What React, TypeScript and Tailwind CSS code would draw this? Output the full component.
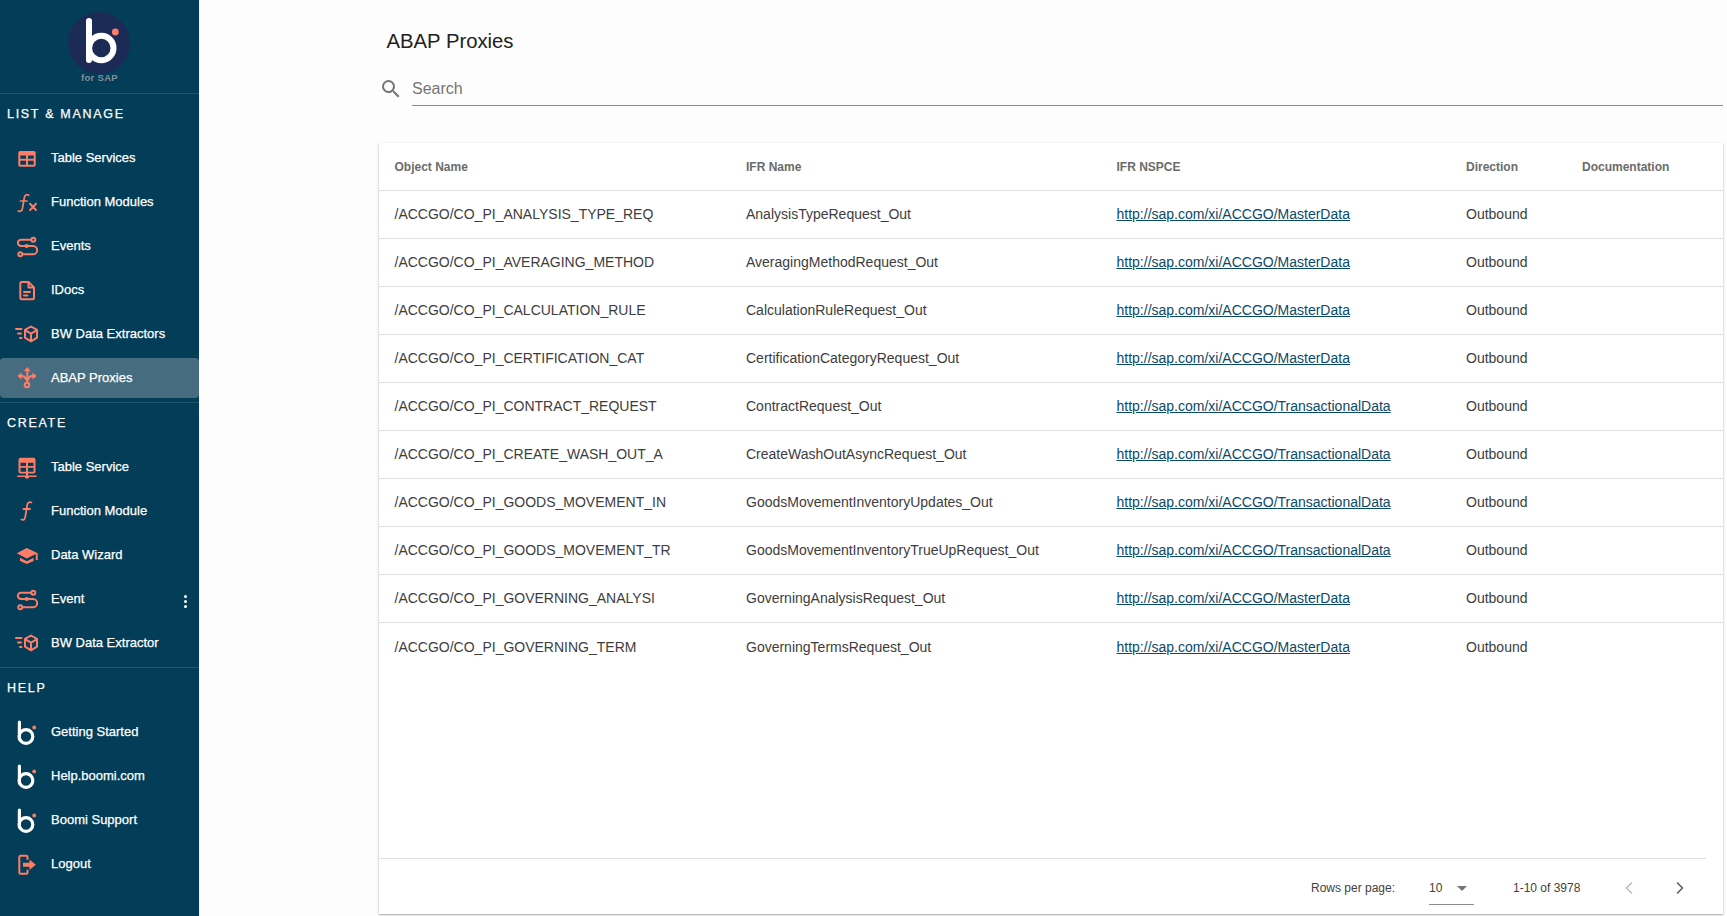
import React from "react";
import { ChevronLeft, ChevronRight } from "lucide-react";

const coral = "#ff7c66";

function BoomiB() {
  return (
    <svg width="24" height="26" viewBox="0 0 24 26" fill="none" className="mt-[1px]">
      <path d="M4.400 2V19" stroke="#fff" strokeWidth="3.200" strokeLinecap="round" />
      <circle cx="11" cy="16.500" r="6.800" stroke="#fff" strokeWidth="3.200" />
      <circle cx="19.200" cy="7.500" r="1.900" fill={coral} />
    </svg>
  );
}

const S = { stroke: coral, strokeWidth: 2, fill: "none", strokeLinecap: "round" as const, strokeLinejoin: "round" as const };

function Svg({ children }: { children: React.ReactNode }) {
  return (
    <svg width="24" height="24" viewBox="0 0 24 24" fill="none">
      {children}
    </svg>
  );
}

const IconTable = () => (
  <Svg>
    <path fill={coral} fillRule="evenodd" d="M5 5h14a1.700 1.700 0 0 1 1.700 1.700V19a1.700 1.700 0 0 1-1.700 1.700H5A1.700 1.700 0 0 1 3.300 19V6.700A1.700 1.700 0 0 1 5 5Zm.300 4.500v3.200h5.700V9.500H5.300Zm7.700 0v3.200h5.700V9.500H13Zm-7.700 5.200v4h5.700v-4H5.300Zm7.700 0v4h5.700v-4H13Z" />
  </Svg>
);
const IconFx = () => (
  <Svg>
    <path {...S} strokeWidth={1.700} d="M13.800 5.200c-2.300-1.300-4-.3-4.500 2.500L7.500 18.300c-.5 2.800-2.200 3.600-4.200 2.600M5.500 11h6.500" />
    <path {...S} d="M15 13.800l6 6.300M21 13.800l-6 6.300" />
  </Svg>
);
const IconF = () => (
  <Svg>
    <path {...S} strokeWidth={1.800} d="M16.400 3.500c-2.400-1-3.700 0-4.200 2.600l-2 12c-.5 2.700-1.900 3.300-3.700 2.400M8.400 10h6.600" />
  </Svg>
);
const IconEvents = () => (
  <Svg>
    <path {...S} d="M16.300 5.700H6a3.150 3.150 0 0 0 0 6.300h12a4.150 4.150 0 0 1 0 8.300H7.300" />
    <circle cx="18.300" cy="5.700" r="2" {...S} />
    <circle cx="5.300" cy="20.300" r="2" {...S} />
    <circle cx="11.700" cy="12" r="2.100" fill={coral} />
  </Svg>
);
const IconDoc = () => (
  <Svg>
    <path {...S} d="M5.300 5.200A1.200 1.200 0 0 1 6.500 4H13.500L19 9.500V20a1.200 1.200 0 0 1-1.200 1.200H6.500A1.200 1.200 0 0 1 5.300 20Z" />
    <path {...S} d="M13.500 4.500V9.500H18.500M9 14H15M9 17.500H12.500" />
  </Svg>
);
const IconCube = () => (
  <Svg>
    <path {...S} d="M16 4.500l6 3.400v7.800l-6 3.600-6-3.600V7.900Z" />
    <path {...S} d="M10.400 8.400l5.600 3.300 5.600-3.300M16 11.700v7.300" />
    <path {...S} d="M1 7h5.500M3 11.500h3M5 16h1.500" />
  </Svg>
);
const IconProxy = () => (
  <Svg>
    <path fill={coral} d="M12.300 1l3.600 4.300H8.700ZM2.300 10l4.300-3.400v6.800ZM21.700 10l-4.300-3.400v6.800Z" />
    <path {...S} d="M12.300 5v11.500M6 10h1c2.600 0 3.300 1.300 4 3" />
    <path {...S} d="M18 10h-1c-2.300 0-3.300 1.600-4.700 4.800" />
    <circle cx="12" cy="19" r="2.300" {...S} />
  </Svg>
);
const IconTableNet = () => (
  <Svg>
    <path fill={coral} fillRule="evenodd" d="M5.500 2.700h13a2 2 0 0 1 2 2v11.800a2 2 0 0 1-2 2H13V20.500h8.700v1.500H14.300a2.400 2.400 0 0 1-4.600 0H2.300v-1.500H11v-2H5.500a2 2 0 0 1-2-2V4.700a2 2 0 0 1 2-2Zm0 5v3.300H11V7.700H5.500Zm7.500 0v3.300h5.500V7.700H13ZM5.500 12.700v4H11v-4H5.500Zm7.500 0v4h5.500v-4H13Z" />
  </Svg>
);
const IconWizard = () => (
  <Svg>
    <path fill={coral} d="M11.800 5 1.700 10.300l10.100 5.300 9-4.700V17h1.900v-6.700L11.800 5Z" />
    <path fill={coral} d="M5 14.700v3.200L11.800 21l6.800-3.100v-3.200l-6.800 3.500L5 14.700Z" />
  </Svg>
);
const IconLogout = () => (
  <Svg>
    <path {...S} d="M12.500 7V5A1.200 1.200 0 0 0 11.300 3.800H5.500A1.200 1.200 0 0 0 4.300 5v15.500a1.200 1.200 0 0 0 1.200 1.200h5.800a1.200 1.200 0 0 0 1.200-1.200v-2" />
    <path fill={coral} d="M8 10.700h6.500V7.500l6.300 5.200-6.300 5.200v-3.200H8Z" />
  </Svg>
);

function NavItem({ icon, label, active, more }: { icon: React.ReactNode; label: string; active?: boolean; more?: boolean }) {
  return (
    <div className={`relative my-[2px] flex h-[40px] items-center rounded-[4px] pl-[15px] ${active ? "bg-[#466c80]" : ""}`}>
      <div className="flex w-[36px] shrink-0 items-center">{icon}</div>
      <span className="text-[13px] leading-[20px] text-white [-webkit-text-stroke:0.25px_white]">{label}</span>
      {more && (
        <div className="absolute right-[12px] top-[16px] flex flex-col gap-[2px]">
          <span className="h-[3px] w-[3px] rounded-full bg-white" />
          <span className="h-[3px] w-[3px] rounded-full bg-white" />
          <span className="h-[3px] w-[3px] rounded-full bg-white" />
        </div>
      )}
    </div>
  );
}

function Section({ title, children }: { title: string; children: React.ReactNode }) {
  return (
    <div className="mt-[2px] border-t border-[#22566f]">
      <div className="pt-[10px] pb-[12px] pl-[7px] text-[12.500px] leading-[20px] tracking-[1.700px] text-white [-webkit-text-stroke:0.25px_white]">{title}</div>
      <div className="flex flex-col">{children}</div>
    </div>
  );
}

const rows = [
  ["/ACCGO/CO_PI_ANALYSIS_TYPE_REQ", "AnalysisTypeRequest_Out", "MasterData"],
  ["/ACCGO/CO_PI_AVERAGING_METHOD", "AveragingMethodRequest_Out", "MasterData"],
  ["/ACCGO/CO_PI_CALCULATION_RULE", "CalculationRuleRequest_Out", "MasterData"],
  ["/ACCGO/CO_PI_CERTIFICATION_CAT", "CertificationCategoryRequest_Out", "MasterData"],
  ["/ACCGO/CO_PI_CONTRACT_REQUEST", "ContractRequest_Out", "TransactionalData"],
  ["/ACCGO/CO_PI_CREATE_WASH_OUT_A", "CreateWashOutAsyncRequest_Out", "TransactionalData"],
  ["/ACCGO/CO_PI_GOODS_MOVEMENT_IN", "GoodsMovementInventoryUpdates_Out", "TransactionalData"],
  ["/ACCGO/CO_PI_GOODS_MOVEMENT_TR", "GoodsMovementInventoryTrueUpRequest_Out", "TransactionalData"],
  ["/ACCGO/CO_PI_GOVERNING_ANALYSI", "GoverningAnalysisRequest_Out", "MasterData"],
  ["/ACCGO/CO_PI_GOVERNING_TERM", "GoverningTermsRequest_Out", "MasterData"],
];

export default function App() {
  return (
    <div className="flex h-[916px] w-[1727px] overflow-hidden bg-[#fdfdfd] text-[14px] text-[#212121]" style={{ fontFamily: '"Liberation Sans", Arial, sans-serif' }}>
      <aside className="flex w-[199px] shrink-0 flex-col bg-[#033d58]">
        <div className="flex h-[91px] flex-col items-center pt-[12px]">
          <div className="-ml-[1px] flex h-[62px] w-[62px] items-center justify-center rounded-full bg-[#1b2b55]">
            <svg width="62" height="62" viewBox="0 0 62 62" fill="none">
              <path d="M21 9V48" stroke="#fff" strokeWidth="6" strokeLinecap="round" />
              <circle cx="33.300" cy="36" r="12.200" stroke="#fff" strokeWidth="6" />
              <circle cx="47.300" cy="20" r="3.400" fill={coral} />
            </svg>
          </div>
          <div className="-mt-[2px] text-[9.500px] leading-[12px] font-bold tracking-[0.3px] text-[#7f8f99]">for SAP</div>
        </div>
        <Section title="LIST & MANAGE">
          <NavItem icon={<IconTable />} label="Table Services" />
          <NavItem icon={<IconFx />} label="Function Modules" />
          <NavItem icon={<IconEvents />} label="Events" />
          <NavItem icon={<IconDoc />} label="IDocs" />
          <NavItem icon={<IconCube />} label="BW Data Extractors" />
          <NavItem icon={<IconProxy />} label="ABAP Proxies" active />
        </Section>
        <Section title="CREATE">
          <NavItem icon={<IconTableNet />} label="Table Service" />
          <NavItem icon={<IconF />} label="Function Module" />
          <NavItem icon={<IconWizard />} label="Data Wizard" />
          <NavItem icon={<IconEvents />} label="Event" more />
          <NavItem icon={<IconCube />} label="BW Data Extractor" />
        </Section>
        <Section title="HELP">
          <NavItem icon={<BoomiB />} label="Getting Started" />
          <NavItem icon={<BoomiB />} label="Help.boomi.com" />
          <NavItem icon={<BoomiB />} label="Boomi Support" />
          <NavItem icon={<IconLogout />} label="Logout" />
        </Section>
      </aside>
      <main className="flex min-w-0 flex-1 flex-col pr-[4px] pb-[2px] pl-[180px]">
        <h1 className="mt-[28px] pl-[7.500px] text-[20.300px] leading-[26px] font-normal text-[#212121]">ABAP Proxies</h1>
        <div className="mt-[17px] flex h-[35px] items-center">
          <svg width="24" height="24" viewBox="0 0 24 24" className="mr-[9px]" fill="#757575">
            <path d="M15.500 14h-.79l-.28-.27A6.471 6.471 0 0 0 16 9.500 6.500 6.500 0 1 0 9.500 16c1.610 0 3.090-.59 4.230-1.570l.27.28v.79l5 4.990L20.490 19l-4.990-5zm-6 0C7.010 14 5 11.990 5 9.500S7.010 5 9.500 5 14 7.010 14 9.500 11.990 14 9.500 14z" />
          </svg>
          <div className="flex h-full flex-1 items-center border-b border-[#8c8c8c] pt-[1px] text-[16px] text-[#757575]">Search</div>
        </div>
        <div className="mt-[37px] flex min-h-0 flex-1 flex-col bg-white shadow-[0_1px_3px_rgba(0,0,0,0.2),0_1px_1px_rgba(0,0,0,0.14)]">
          <div className="flex-1">
            <div className="flex h-[48px] items-center border-b border-[#e0e0e0] text-[12px] font-bold text-[#6b6b6b]">
              <div className="w-[352px] pl-[15.500px]">Object Name</div>
              <div className="w-[370.500px] pl-[15px]">IFR Name</div>
              <div className="w-[349.500px] pl-[15px]">IFR NSPCE</div>
              <div className="w-[116px] pl-[15px]">Direction</div>
              <div className="pl-[15px]">Documentation</div>
            </div>
            {rows.map((r, i) => (
              <div key={r[0]} className={`flex items-center text-[14px] text-[#3d3d3d] ${i === 9 ? "h-[49px]" : "h-[48px] border-b border-[#e0e0e0]"}`}>
                <div className="w-[352px] pl-[15.500px] whitespace-nowrap">{r[0]}</div>
                <div className="w-[370.500px] pl-[15px] whitespace-nowrap">{r[1]}</div>
                <div className="w-[349.500px] pl-[15px] whitespace-nowrap">
                  <a className="text-[#0a4a68] underline">http://sap.com/xi/ACCGO/{r[2]}</a>
                </div>
                <div className="w-[116px] pl-[15px]">Outbound</div>
                <div />
              </div>
            ))}
          </div>
          <div className="mr-[17px] flex h-[56px] items-center border-t border-[#e0e0e0] pt-[3px] text-[12px] text-[#424242]">
            <div className="ml-[932px] w-[118px]">Rows per page:</div>
            <div className="mt-[1px] flex h-[33px] w-[45px] items-center justify-between border-b border-[#8c8c8c]">
              <span>10</span>
              <span className="mr-[7px] h-0 w-0 border-x-[5px] border-t-[5px] border-x-transparent border-t-[#757575]" />
            </div>
            <div className="ml-[39px] w-[106px]">1-10 of 3978</div>
            <ChevronLeft size={20} strokeWidth={2} className="text-[#bdbdbd]" />
            <ChevronRight size={20} strokeWidth={2} className="ml-[31px] text-[#616161]" />
          </div>
        </div>
      </main>
    </div>
  );
}
